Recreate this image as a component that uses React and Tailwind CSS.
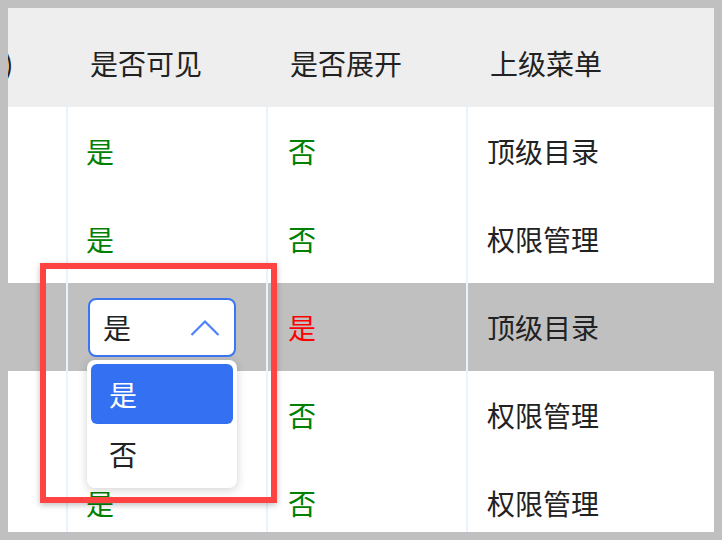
import React from "react";

const font = { fontFamily: '"Noto Sans CJK SC", "Noto Sans", sans-serif' };

const rows = [
  { visible: "是", expand: "否", parent: "顶级目录" },
  { visible: "是", expand: "否", parent: "权限管理" },
  { visible: "是", expand: "是", parent: "顶级目录", active: true },
  { visible: "", expand: "否", parent: "权限管理" },
  { visible: "是", expand: "否", parent: "权限管理" },
];

const ChevronUp = () => (
  <svg width="30" height="17" viewBox="0 0 30 17" fill="none">
    <polyline points="1.5,16 15,2.5 28.5,16" stroke="#4f82f7" strokeWidth="2.2" />
  </svg>
);

function SelectOpen() {
  return (
    <div className="relative ml-[2px]">
      <div className="w-[148px] h-[59px] rounded-lg border-2 border-[#3b76f2] bg-white flex items-center justify-between pl-[13px] pr-[14px]">
        <span className="text-[#222]">是</span>
        <ChevronUp />
      </div>
      <div className="absolute left-[-1px] top-[62px] z-10 w-[150px] rounded-lg bg-white p-1 shadow-[0_2px_10px_rgba(0,0,0,0.18)]">
        <div className="h-[60px] rounded-md bg-[#3370f2] text-white flex items-center pl-[18px]">是</div>
        <div className="h-[60px] flex items-center pl-[18px] text-[#222]">否</div>
      </div>
    </div>
  );
}

export default function App() {
  return (
    <div className="w-[722px] h-[540px] bg-[#c0c0c0] p-2 text-[28px] leading-none" style={font}>
      <div className="relative h-full bg-white overflow-hidden">
        {/* header */}
        <div className="flex h-[99px] bg-[#eeeeee] text-[#222]">
          <div className="w-[58px] flex items-center pt-[10px] overflow-hidden">
            <span className="-ml-[4px]">)</span>
          </div>
          <div className="w-[200px] flex items-center pt-[10px] pl-6">是否可见</div>
          <div className="w-[200px] flex items-center pt-[10px] pl-6">是否展开</div>
          <div className="flex-1 flex items-center pt-[10px] pl-6">上级菜单</div>
        </div>

        {/* body */}
        {rows.map((r, i) => (
          <div key={i} className={`flex h-[88px] ${r.active ? "bg-[#c0c0c0]" : ""}`}>
            <div className="w-[58px]" />
            <div className="w-[200px] border-l-2 border-[#e8f3fe] flex items-center pl-[18px]">
              {r.active ? <SelectOpen /> : <span className="text-[#008000]">{r.visible}</span>}
            </div>
            <div className="w-[200px] border-l-2 border-[#e8f3fe] flex items-center pl-[20px]">
              <span className={r.active ? "text-[#ff0000]" : "text-[#008000]"}>{r.expand}</span>
            </div>
            <div className="flex-1 border-l-2 border-[#e8f3fe] flex items-center pl-[19px] text-[#222]">
              {r.parent}
            </div>
          </div>
        ))}

        {/* annotation */}
        <div className="absolute left-[32px] top-[255px] w-[237px] h-[240px] border-[6px] border-[#ff4343] z-20 shadow-[0_2px_6px_rgba(0,0,0,0.25)]" />
      </div>
    </div>
  );
}
